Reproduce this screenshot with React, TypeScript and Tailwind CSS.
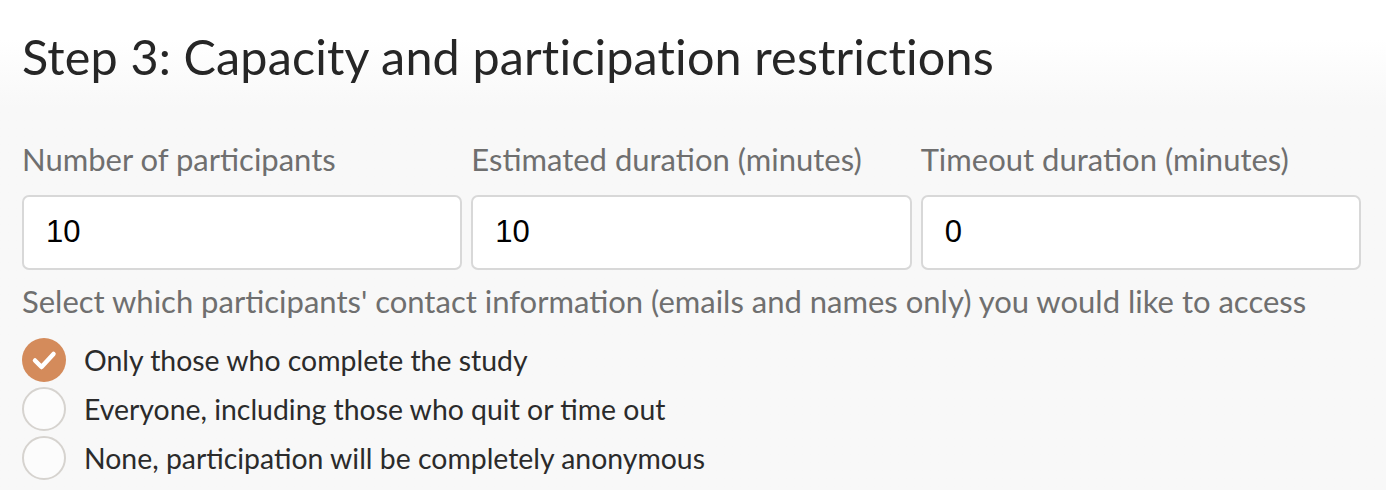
const options = [
  "Only those who complete the study",
  "Everyone, including those who quit or time out",
  "None, participation will be completely anonymous",
];

const fields = [
  { label: "Number of participants", value: "10" },
  { label: "Estimated duration (minutes)", value: "10" },
  { label: "Timeout duration (minutes)", value: "0" },
];

export default function App() {
  return (
    <div
      className="h-[490px] w-full overflow-hidden bg-gradient-to-b from-white from-[8%] to-[#f8f8f8] to-[22%] pl-[22px] pr-[25px] pt-[24px]"
      style={{ fontFamily: "Lato, 'Open Sans', sans-serif" }}
    >
      <h1 className="text-[48.5px] leading-[64px] tracking-[0.15px] text-[#262626]">
        Step 3: Capacity and participation restrictions
      </h1>

      <div className="mt-[53px] grid grid-cols-3 gap-[9px]">
        {fields.map((f) => (
          <div key={f.label} className="flex flex-col">
            <label className="text-[31px] leading-[36px] text-[#6f6f6f]">{f.label}</label>
            <div className="mt-[18px] flex h-[75px] items-center rounded-[7px] border-2 border-[#d8d8d8] bg-white px-[22px]">
              <span
                className="text-[31px] text-black"
                style={{ fontFamily: "'Liberation Sans', Arial, sans-serif" }}
              >
                {f.value}
              </span>
            </div>
          </div>
        ))}
      </div>

      <p className="mt-[13px] text-[31px] leading-[36px] text-[#6f6f6f]">
        Select which participants' contact information (emails and names only) you would like to access
      </p>

      <div className="mt-[19px] flex flex-col gap-[5px]">
        {options.map((o, i) => (
          <div key={o} className="flex items-center gap-[18px]">
            {i === 0 ? (
              <span className="h-[44px] w-[44px] shrink-0 rounded-full bg-[#d48b5b]">
                <svg width="44" height="44" viewBox="0 0 44 44" fill="none">
                  <path d="M13 22.5l6.5 6.5L31.5 16" stroke="white" strokeWidth="4.5" strokeLinecap="round" strokeLinejoin="round" />
                </svg>
              </span>
            ) : (
              <span className="h-[44px] w-[44px] shrink-0 rounded-full border-2 border-[#d6d3cf] bg-[#fcfcfc]" />
            )}
            <span className="text-[28.4px] leading-[44px] text-[#2b2b2b]">{o}</span>
          </div>
        ))}
      </div>
    </div>
  );
}
